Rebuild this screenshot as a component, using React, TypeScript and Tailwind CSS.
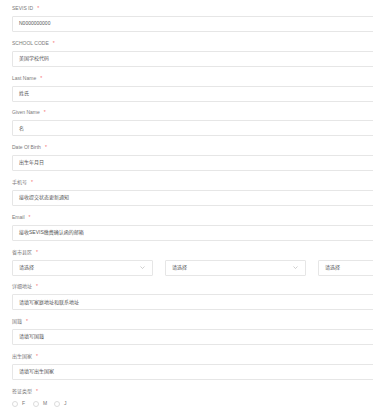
import React from "react";

const font = { fontFamily: '"Liberation Sans", "Noto Sans CJK SC", sans-serif' };

function Label({ text }: { text: string }) {
  return (
    <div className="flex h-[10px] items-center text-[5px] leading-[10px] text-[#7a7a7a]">
      <span>{text}</span>
      <span className="ml-[4px] text-[#f56c6c]">*</span>
    </div>
  );
}

function Input({ value }: { value: string }) {
  return (
    <div className="flex h-[16px] w-[445px] items-center rounded-[1px] border border-[#e6e6e6] pl-[6px] text-[5px] text-[#555]">
      {value}
    </div>
  );
}

function Chevron() {
  return (
    <svg width="5" height="3" viewBox="0 0 10 6" className="text-[#b0b0b0]">
      <path d="M1 1l4 4 4-4" fill="none" stroke="currentColor" strokeWidth="1.2" />
    </svg>
  );
}

function Select({ last }: { last?: boolean }) {
  return (
    <div className="flex h-[16px] w-[141px] shrink-0 items-center justify-between rounded-[1px] border border-[#e6e6e6] pl-[6px] pr-[7px] text-[5px] text-[#555]">
      <span>请选择</span>
      {!last && <Chevron />}
    </div>
  );
}

function Field({ label, children }: { label: string; children: React.ReactNode }) {
  return (
    <div className="flex flex-col">
      <div className="mb-[3px]">
        <Label text={label} />
      </div>
      {children}
    </div>
  );
}

function Radio({ text }: { text: string }) {
  return (
    <div className="flex w-[21px] items-center gap-[4px]">
      <span className="h-[6px] w-[6px] rounded-full border border-[#dcdcdc] bg-white" />
      <span className="text-[5px] text-[#777]">{text}</span>
    </div>
  );
}

export default function App() {
  const fields: [string, string][] = [
    ["SEVIS ID", "N0000000000"],
    ["SCHOOL CODE", "美国学校代码"],
    ["Last Name", "姓氏"],
    ["Given Name", "名"],
    ["Date Of Birth", "出生年月日"],
    ["手机号", "接收提交状态更新通知"],
    ["Email", "接收SEVIS缴费确认函的邮箱"],
  ];
  const after: [string, string][] = [
    ["详细地址", "请填写家庭地址和联系地址"],
    ["国籍", "请填写国籍"],
    ["出生国家", "请填写出生国家"],
  ];
  return (
    <div className="h-[414px] w-[373px] overflow-hidden bg-white" style={font}>
      <div className="flex flex-col gap-[5.8px] pl-[12px] pt-[3px]">
        {fields.map(([l, v]) => (
          <Field key={l} label={l}>
            <Input value={v} />
          </Field>
        ))}
        <Field label="省市县区">
          <div className="flex gap-[12px]">
            <Select />
            <Select />
            <Select last />
          </div>
        </Field>
        {after.map(([l, v]) => (
          <Field key={l} label={l}>
            <Input value={v} />
          </Field>
        ))}
        <div className="flex flex-col">
          <Label text="签证类型" />
          <div className="mt-[4px] flex items-center pl-[0px]">
            <Radio text="F" />
            <Radio text="M" />
            <Radio text="J" />
          </div>
        </div>
      </div>
    </div>
  );
}
